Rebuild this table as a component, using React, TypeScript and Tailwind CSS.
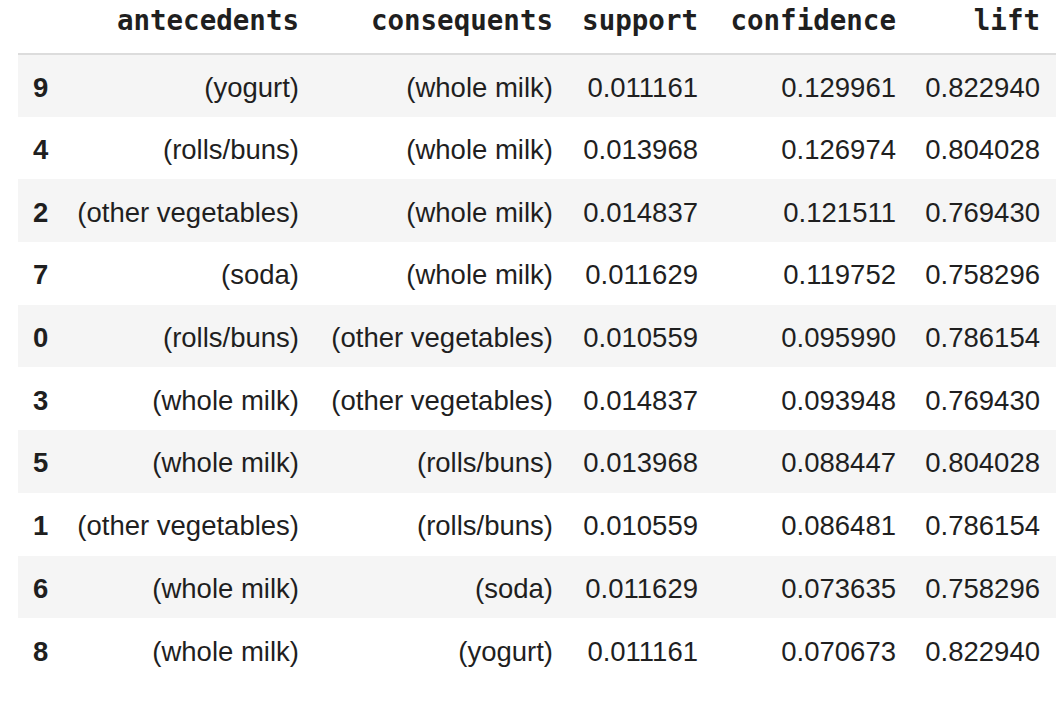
import React from "react";

const rows = [
  ["9", "(yogurt)", "(whole milk)", "0.011161", "0.129961", "0.822940"],
  ["4", "(rolls/buns)", "(whole milk)", "0.013968", "0.126974", "0.804028"],
  ["2", "(other vegetables)", "(whole milk)", "0.014837", "0.121511", "0.769430"],
  ["7", "(soda)", "(whole milk)", "0.011629", "0.119752", "0.758296"],
  ["0", "(rolls/buns)", "(other vegetables)", "0.010559", "0.095990", "0.786154"],
  ["3", "(whole milk)", "(other vegetables)", "0.014837", "0.093948", "0.769430"],
  ["5", "(whole milk)", "(rolls/buns)", "0.013968", "0.088447", "0.804028"],
  ["1", "(other vegetables)", "(rolls/buns)", "0.010559", "0.086481", "0.786154"],
  ["6", "(whole milk)", "(soda)", "0.011629", "0.073635", "0.758296"],
  ["8", "(whole milk)", "(yogurt)", "0.011161", "0.070673", "0.822940"],
];

const headers = ["antecedents", "consequents", "support", "confidence", "lift"];

export default function App() {
  return (
    <div className="w-[1062px] h-[704px] bg-white overflow-hidden">
      <table
        className="ml-[18px] w-[1038px] table-fixed border-collapse text-[#1f1f1f] text-[27.5px]"
        style={{ fontFamily: '"Liberation Sans", Arial, sans-serif' }}
      >
        <colgroup>
          <col className="w-[44px]" />
          <col className="w-[253px]" />
          <col className="w-[254px]" />
          <col className="w-[145px]" />
          <col className="w-[198px]" />
          <col className="w-[144px]" />
        </colgroup>
        <thead>
          <tr className="border-b-2 border-[#dcdcdc]">
            <th className="h-[53px]" />
            {headers.map((h) => (
              <th
                key={h}
                className="pr-[16px] pt-[4px] pb-[17px] text-right font-bold leading-[32px] whitespace-nowrap"
                style={{ fontFamily: '"DejaVu Sans Mono", "Liberation Mono", monospace' }}
              >
                {h}
              </th>
            ))}
          </tr>
        </thead>
        <tbody>
          {rows.map((r, i) => (
            <tr key={i} className={i % 2 === 0 ? "bg-[#f5f5f5]" : "bg-white"}>
              <th className="h-[62.7px] pl-[15px] pt-[4px] text-left font-bold leading-[32px]">
                {r[0]}
              </th>
              {r.slice(1).map((v, j) => (
                <td key={j} className="pr-[16px] pt-[4px] text-right leading-[32px] whitespace-nowrap">
                  {v}
                </td>
              ))}
            </tr>
          ))}
        </tbody>
      </table>
    </div>
  );
}
